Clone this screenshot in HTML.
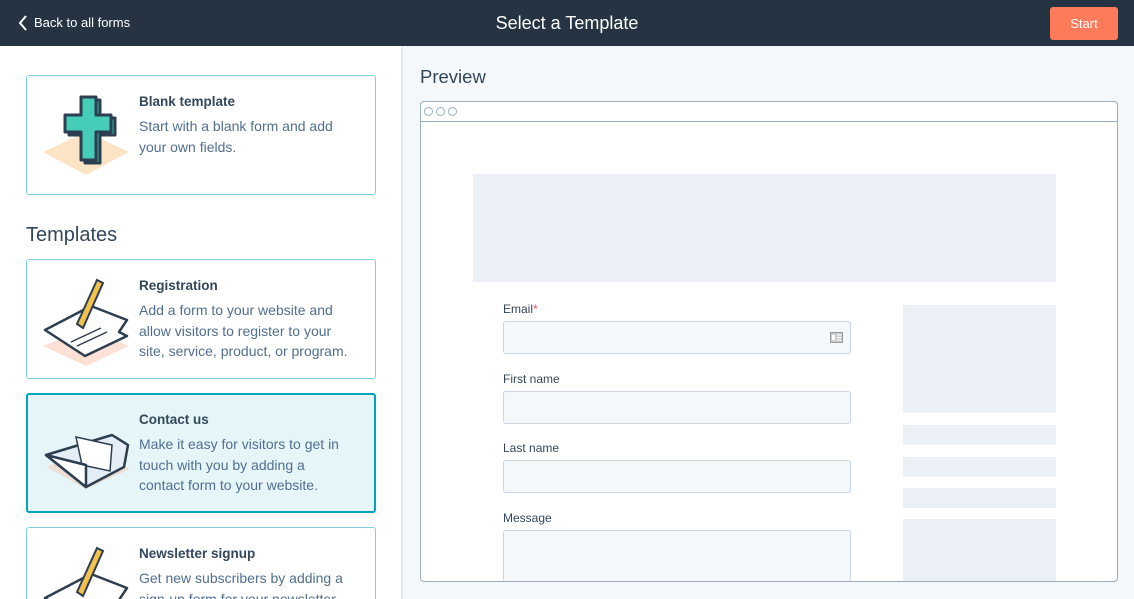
<!DOCTYPE html>
<html><head><meta charset="utf-8"><style>
*{box-sizing:border-box;margin:0;padding:0}
html,body{width:1134px;height:599px;overflow:hidden}
body{font-family:"Liberation Sans",sans-serif;background:#f5f8fa;position:relative;color:#33475b}
.hdr{position:absolute;left:0;top:0;width:1134px;height:46px;background:#253342;color:#fff}
.back{position:absolute;left:34px;top:15px;font-size:13px}
.title{position:absolute;left:0;right:0;top:13px;text-align:center;font-size:18px}
.start{position:absolute;left:1050px;top:7px;width:68px;height:33px;background:#ff7a59;border-radius:3px;color:#fff;font-size:13px;text-align:center;line-height:33px}
.left{position:absolute;left:0;top:46px;width:403px;height:553px;background:#fff;border-right:2px solid #e5eaf0;overflow:hidden}
.card{position:absolute;left:26px;width:350px;height:120px;border:1px solid #7fd1de;border-radius:3px;background:#fff;overflow:hidden}
.card.sel{border:2px solid #00a4bd;background:#e5f5f8}
.card h3{position:absolute;left:112px;top:18px;font-size:13.5px;font-weight:bold;color:#33475b}
.card p{position:absolute;left:112px;top:40px;width:212px;font-size:14px;line-height:20.5px;color:#516f90}
.card.sel h3{left:111px;top:17px}.card.sel p{left:111px;top:39px}
.card svg{position:absolute;left:14px;top:16px}
.tp{position:absolute;left:26px;top:178px;font-size:20px;color:#33475b}
.prev{position:absolute;left:420px;top:66px;font-size:18.5px;color:#33475b}
.win{position:absolute;left:420px;top:101px;width:698px;height:481px;border:1.5px solid #99afc4;border-radius:4px;background:#fff;overflow:hidden}
.bar{height:20px;border-bottom:1.5px solid #99afc4}
.dot{position:absolute;top:5px;width:9px;height:9px;border:1px solid #99afc4;border-radius:50%}
.g{position:absolute;background:#eaf0f6}
.lab{position:absolute;font-size:12px;color:#33475b}
.inp{position:absolute;left:82px;width:348px;height:33px;background:#f5f8fa;border:1px solid #cbd6e2;border-radius:3px}
</style></head><body>
<div class="hdr">
<svg style="position:absolute;left:18px;top:15px" width="10" height="16"><path d="M8 1L2 8l6 7" stroke="#fff" stroke-width="2" fill="none"/></svg>
<div class="back">Back to all forms</div>
<div class="title">Select a Template</div>
<div class="start">Start</div>
</div>
<div class="left">
<div class="card" style="top:29px"><svg width="90" height="90"><path d="M2 60L45 40 88 60 45 83z" fill="#fde4c6"/><path d="M44 8h15v18h15v17H59v28H44V43H28V26h16z" fill="#2fb39e" stroke="#2d3e50" stroke-width="3" stroke-linejoin="round"/><path d="M40 5h15v18h15v17H55v28H40V40H24V23h16z" fill="#45cdb7" stroke="#2d3e50" stroke-width="3" stroke-linejoin="round"/></svg><h3>Blank template</h3><p>Start with a blank form and add your own fields.</p></div>
<div class="tp">Templates</div>
<div class="card" style="top:213px"><svg width="90" height="90"><path d="M2 70L45 52 88 70 45 90z" fill="#fde0d6"/><path d="M4 54L50 30 86 44 78 56 86 60 44 80z" fill="#fff" stroke="#2d3e50" stroke-width="2.5" stroke-linejoin="round"/><path d="M36 48L56 4 62 7 42 52z" fill="#f2c14e" stroke="#2d3e50" stroke-width="2"/><path d="M30 66l30-14M36 70l30-14" stroke="#2d3e50" stroke-width="1.5"/></svg><h3>Registration</h3><p>Add a form to your website and allow visitors to register to your site, service, product, or program.</p></div>
<div class="card sel" style="top:347px"><svg width="90" height="90"><path d="M4 56L46 40 88 58 44 78z" fill="#ecdfd6"/><path d="M4 44L70 24 86 34 82 56 44 76z" fill="#e5eef7" stroke="#2d3e50" stroke-width="2.5" stroke-linejoin="round"/><path d="M34 26L70 34 68 60 40 54z" fill="#fff" stroke="#2d3e50" stroke-width="1.5"/><path d="M4 44L44 54 44 76z" fill="#fff" stroke="#2d3e50" stroke-width="2.5" stroke-linejoin="round"/></svg><h3>Contact us</h3><p>Make it easy for visitors to get in touch with you by adding a contact form to your website.</p></div>
<div class="card" style="top:481px"><svg width="90" height="90"><path d="M4 54L50 30 86 44 78 56 86 60 44 80z" fill="#fff" stroke="#2d3e50" stroke-width="2.5" stroke-linejoin="round"/><path d="M36 48L56 4 62 7 42 52z" fill="#f2c14e" stroke="#2d3e50" stroke-width="2"/></svg><h3>Newsletter signup</h3><p>Get new subscribers by adding a sign-up form for your newsletter.</p></div>
</div>
<div class="prev">Preview</div>
<div class="win"><div class="bar"></div>
<div class="dot" style="left:3px"></div><div class="dot" style="left:15px"></div><div class="dot" style="left:27px"></div>
<div class="g" style="left:52px;top:72px;width:583px;height:108px"></div>
<div class="lab" style="left:82px;top:200px">Email<span style="color:#f2545b">*</span></div>
<div class="inp" style="top:219px"><svg style="position:absolute;right:7px;top:10px" width="13" height="11"><rect x=".5" y=".5" width="12" height="10" fill="#ccc" stroke="#999"/><rect x="2" y="3" width="3" height="5" fill="#fff"/><path d="M7 3h4M7 5.5h4M7 8h4" stroke="#fff"/></svg></div>
<div class="lab" style="left:82px;top:270px">First name</div>
<div class="inp" style="top:289px"></div>
<div class="lab" style="left:82px;top:339px">Last name</div>
<div class="inp" style="top:358px"></div>
<div class="lab" style="left:82px;top:409px">Message</div>
<div class="inp" style="top:428px;height:52px"></div>
<div class="g" style="left:482px;top:203px;width:153px;height:108px"></div>
<div class="g" style="left:482px;top:323px;width:153px;height:20px"></div>
<div class="g" style="left:482px;top:355px;width:153px;height:20px"></div>
<div class="g" style="left:482px;top:386px;width:153px;height:20px"></div>
<div class="g" style="left:482px;top:417px;width:153px;height:70px"></div>
</div>
</body></html>
